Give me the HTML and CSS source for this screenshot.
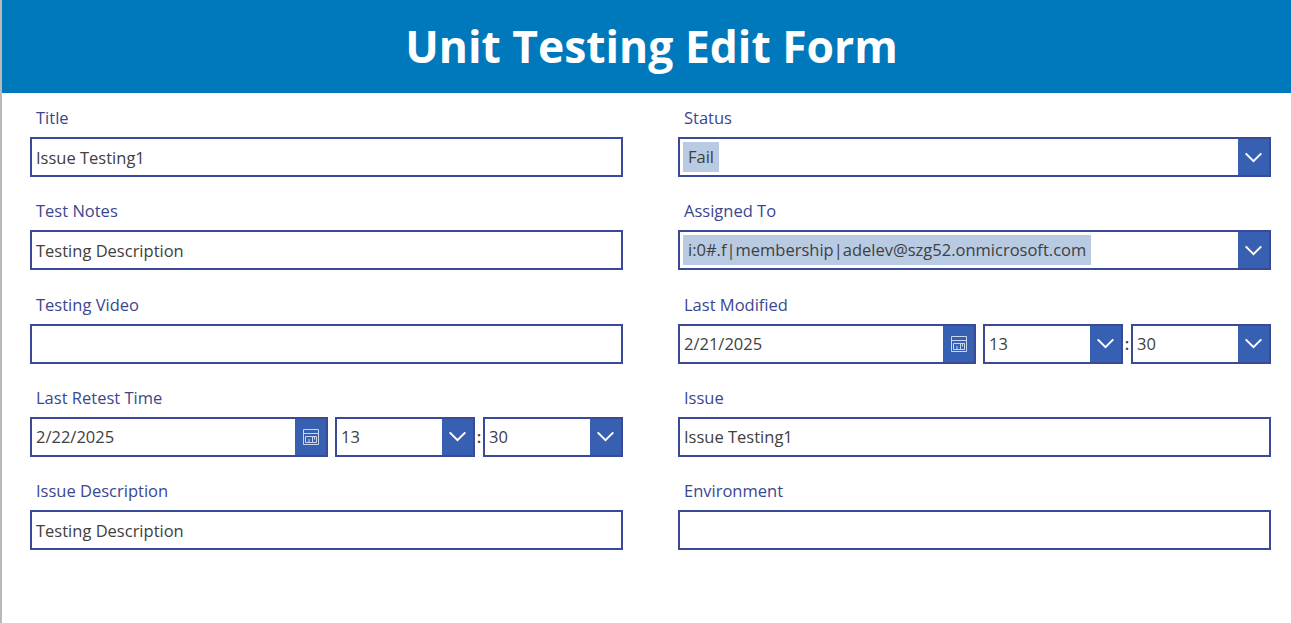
FILE: index.html
```html
<!DOCTYPE html>
<html lang="en">
<head>
    <meta charset="UTF-8">
    <meta name="viewport" content="width=device-width, initial-scale=1.0">
    <title>Unit Testing Edit Form</title>
    <link rel="stylesheet" href="styles.css">
</head>
<body>

    <header class="form-header">
        <h1>Unit Testing Edit Form</h1>
    </header>

    <main class="edit-form">
        <div class="form-group">
            <div class="field-label">Title</div>
            <div class="field-box"><span class="field-value">Issue Testing1</span></div>
        </div>
        <div class="form-group">
            <div class="field-label">Status</div>
            <div class="field-box">
                <span class="field-value chip-wrap"><span class="chip">Fail</span></span>
                <span class="btn-square"><svg class="chevron" viewBox="0 0 20 12"><path d="M1.5 1.5 L10 10 L18.5 1.5"/></svg></span>
            </div>
        </div>

        <div class="form-group">
            <div class="field-label">Test Notes</div>
            <div class="field-box"><span class="field-value">Testing Description</span></div>
        </div>
        <div class="form-group">
            <div class="field-label">Assigned To</div>
            <div class="field-box">
                <span class="field-value chip-wrap"><span class="chip">i:0#.f|membership|adelev@szg52.onmicrosoft.com</span></span>
                <span class="btn-square"><svg class="chevron" viewBox="0 0 20 12"><path d="M1.5 1.5 L10 10 L18.5 1.5"/></svg></span>
            </div>
        </div>

        <div class="form-group">
            <div class="field-label">Testing Video</div>
            <div class="field-box"></div>
        </div>
        <div class="form-group">
            <div class="field-label">Last Modified</div>
            <div class="date-row">
                <div class="field-box date-box">
                    <span class="field-value">2/21/2025</span>
                    <span class="btn-square"><svg class="calendar" viewBox="0 0 16 16"><path d="M0.5 0.5 H15.5 V15.5 H0.5 Z M0.5 4.5 H15.5 M2.5 7.5 H13.5 V13.5 H2.5 Z M6 10 V13.5 M9.5 7.5 V13.5 M11.5 7.5 V10.5"/></svg></span>
                </div>
                <div class="field-box time-box">
                    <span class="field-value">13</span>
                    <span class="btn-square"><svg class="chevron" viewBox="0 0 20 12"><path d="M1.5 1.5 L10 10 L18.5 1.5"/></svg></span>
                </div>
                <span class="time-sep">:</span>
                <div class="field-box time-box">
                    <span class="field-value">30</span>
                    <span class="btn-square"><svg class="chevron" viewBox="0 0 20 12"><path d="M1.5 1.5 L10 10 L18.5 1.5"/></svg></span>
                </div>
            </div>
        </div>

        <div class="form-group">
            <div class="field-label">Last Retest Time</div>
            <div class="date-row">
                <div class="field-box date-box">
                    <span class="field-value">2/22/2025</span>
                    <span class="btn-square"><svg class="calendar" viewBox="0 0 16 16"><path d="M0.5 0.5 H15.5 V15.5 H0.5 Z M0.5 4.5 H15.5 M2.5 7.5 H13.5 V13.5 H2.5 Z M6 10 V13.5 M9.5 7.5 V13.5 M11.5 7.5 V10.5"/></svg></span>
                </div>
                <div class="field-box time-box">
                    <span class="field-value">13</span>
                    <span class="btn-square"><svg class="chevron" viewBox="0 0 20 12"><path d="M1.5 1.5 L10 10 L18.5 1.5"/></svg></span>
                </div>
                <span class="time-sep">:</span>
                <div class="field-box time-box">
                    <span class="field-value">30</span>
                    <span class="btn-square"><svg class="chevron" viewBox="0 0 20 12"><path d="M1.5 1.5 L10 10 L18.5 1.5"/></svg></span>
                </div>
            </div>
        </div>
        <div class="form-group">
            <div class="field-label">Issue</div>
            <div class="field-box"><span class="field-value">Issue Testing1</span></div>
        </div>

        <div class="form-group">
            <div class="field-label">Issue Description</div>
            <div class="field-box"><span class="field-value">Testing Description</span></div>
        </div>
        <div class="form-group">
            <div class="field-label">Environment</div>
            <div class="field-box"></div>
        </div>
    </main>

</body>
</html>
```

FILE: styles.css
```css
/* Page with the grey strip down the left edge */
body {
    font-family: "Open Sans", Arial, sans-serif;
    background: #fff;
    margin: 0;
    height: 623px;
    overflow: hidden;
    border-left: 2px solid #b9b9b9;
}

.form-header {
    height: 93px;
    padding-left: 10px;
    background: #0079bc;
    color: #fff;
    display: flex;
    align-items: center;
    justify-content: center;
}

.form-header h1 {
    margin: 0;
    font-size: 44.4px;
    font-weight: 700;
    line-height: 1;
}

.edit-form {
    display: grid;
    grid-template-columns: 593px 593px;
    column-gap: 55px;
    grid-auto-rows: 93.25px;
    padding: 14px 0 0 28px;
}

.field-label {
    height: 21px;
    margin: 0 0 9px 6px;
    font-size: 16.5px;
    line-height: 21px;
    color: #3a478f;
}

.field-box {
    box-sizing: border-box;
    height: 40px;
    border: 2px solid #3a4a97;
    display: flex;
    align-items: center;
    background: #fff;
    color: #404040;
    font-size: 16.5px;
}

.field-value {
    flex: 1;
    min-width: 0;
    padding-left: 4px;
    white-space: nowrap;
}

.chip-wrap {
    padding-left: 3px;
}

.chip {
    display: inline-block;
    background: #b9cbe3;
    padding: 0 5px;
    line-height: 30px;
}

.btn-square {
    width: 31px;
    height: 100%;
    background: #3760b2;
    display: flex;
    align-items: center;
    justify-content: center;
    flex-shrink: 0;
}

.chevron {
    width: 19px;
    height: 11px;
    fill: none;
    stroke: #fff;
    stroke-width: 2.2;
}

.calendar {
    width: 16px;
    height: 16px;
    fill: none;
    stroke: #c9d6ec;
    stroke-width: 1;
}

.date-row {
    display: flex;
    align-items: center;
}

.date-box {
    width: 298px;
    flex-shrink: 0;
    margin-right: 7px;
}

.time-box {
    width: 140px;
    flex-shrink: 0;
}

.time-sep {
    width: 8px;
    text-align: center;
    color: #404040;
    font-size: 16.5px;
    font-weight: 600;
}
```
